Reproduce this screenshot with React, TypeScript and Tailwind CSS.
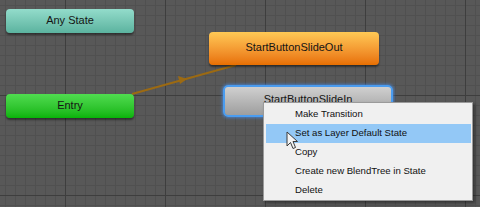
import React from "react";

const minor = Array.from({ length: 48 }, (_, i) => 5 + i * 10);
const majorX = [65, 165, 265, 365, 465];
const majorY = [95, 195];

function Node({
  label,
  className,
}: {
  label: string;
  className: string;
}) {
  return (
    <div
      className={`absolute flex items-center justify-center rounded-[4px] pb-[2px] text-[11px] text-[#141414] shadow-[0_2px_2px_rgba(0,0,0,0.45)] ${className}`}
    >
      {label}
    </div>
  );
}

const items = [
  "Make Transition",
  "Set as Layer Default State",
  "Copy",
  "Create new BlendTree in State",
  "Delete",
];

export default function App() {
  return (
    <div
      className="relative w-[480px] h-[207px] overflow-hidden bg-[#585858]"
      style={{ fontFamily: '"Liberation Sans", Arial, sans-serif' }}
    >
      <svg className="absolute inset-0" width={480} height={207}>
        {minor.map((v) => (
          <line key={"v" + v} x1={v + 0.5} y1={0} x2={v + 0.5} y2={207} stroke="#505050" strokeWidth={1} />
        ))}
        {minor.map((v) => (
          <line key={"h" + v} x1={0} y1={v + 0.5} x2={480} y2={v + 0.5} stroke="#505050" strokeWidth={1} />
        ))}
        {majorX.map((v) => (
          <line key={"mv" + v} x1={v + 0.5} y1={0} x2={v + 0.5} y2={207} stroke="#3e3e3e" strokeWidth={1} />
        ))}
        {majorY.map((v) => (
          <line key={"mh" + v} x1={0} y1={v + 0.5} x2={480} y2={v + 0.5} stroke="#3e3e3e" strokeWidth={1} />
        ))}
        <line x1={132} y1={94} x2={236} y2={65} stroke="#9c6a12" strokeWidth={2} />
        <polygon points="187,79 178,76 180,84" fill="#9c6a12" transform="rotate(0)" />
      </svg>

      <Node label="Any State" className="left-[6px] top-[9px] w-[128px] h-[24px] bg-gradient-to-b from-[#93dccb] to-[#5bb39f]" />
      <Node label="StartButtonSlideOut" className="left-[209px] top-[32px] w-[170px] h-[33px] bg-gradient-to-b from-[#ffc955] to-[#e76f00]" />
      <Node label="Entry" className="left-[6px] top-[94px] w-[128px] h-[24px] bg-gradient-to-b from-[#4fdc4f] to-[#06b406]" />
      <div className="absolute left-[223px] top-[85px] w-[170px] h-[32px] rounded-[5px] border-2 border-[#4a9cf0] bg-gradient-to-b from-[#d0d0d0] to-[#9e9e9e] shadow-[0_0_3px_1px_rgba(70,150,255,0.6)] flex justify-center pt-[4px] text-[11px] text-[#141414]">
        StartButtonSlideIn
      </div>

      <div className="absolute left-[263px] top-[102px] w-[210px] h-[99px] bg-[#f0f0f0] border border-[#9a9a9a] shadow-[2px_2px_3px_rgba(0,0,0,0.4)] py-[2px] text-[9.6px] text-[#111]">
        {items.map((t, i) => (
          <div
            key={t}
            className={`h-[19px] flex items-center pl-[29px] ml-[2px] mr-[1px] ${i === 1 ? "bg-[#93c8f6]" : ""}`}
          >
            {t}
          </div>
        ))}
      </div>

      <svg className="absolute left-[286px] top-[131px]" width={14} height={20} viewBox="0 0 14 20">
        <path
          d="M1 1 L1 15 L4.5 11.5 L7 17.5 L9.5 16.5 L7 10.5 L11.5 10.5 Z"
          fill="#f4f4f4"
          stroke="#3a3a3a"
          strokeWidth={1}
          strokeLinejoin="round"
        />
      </svg>
    </div>
  );
}
